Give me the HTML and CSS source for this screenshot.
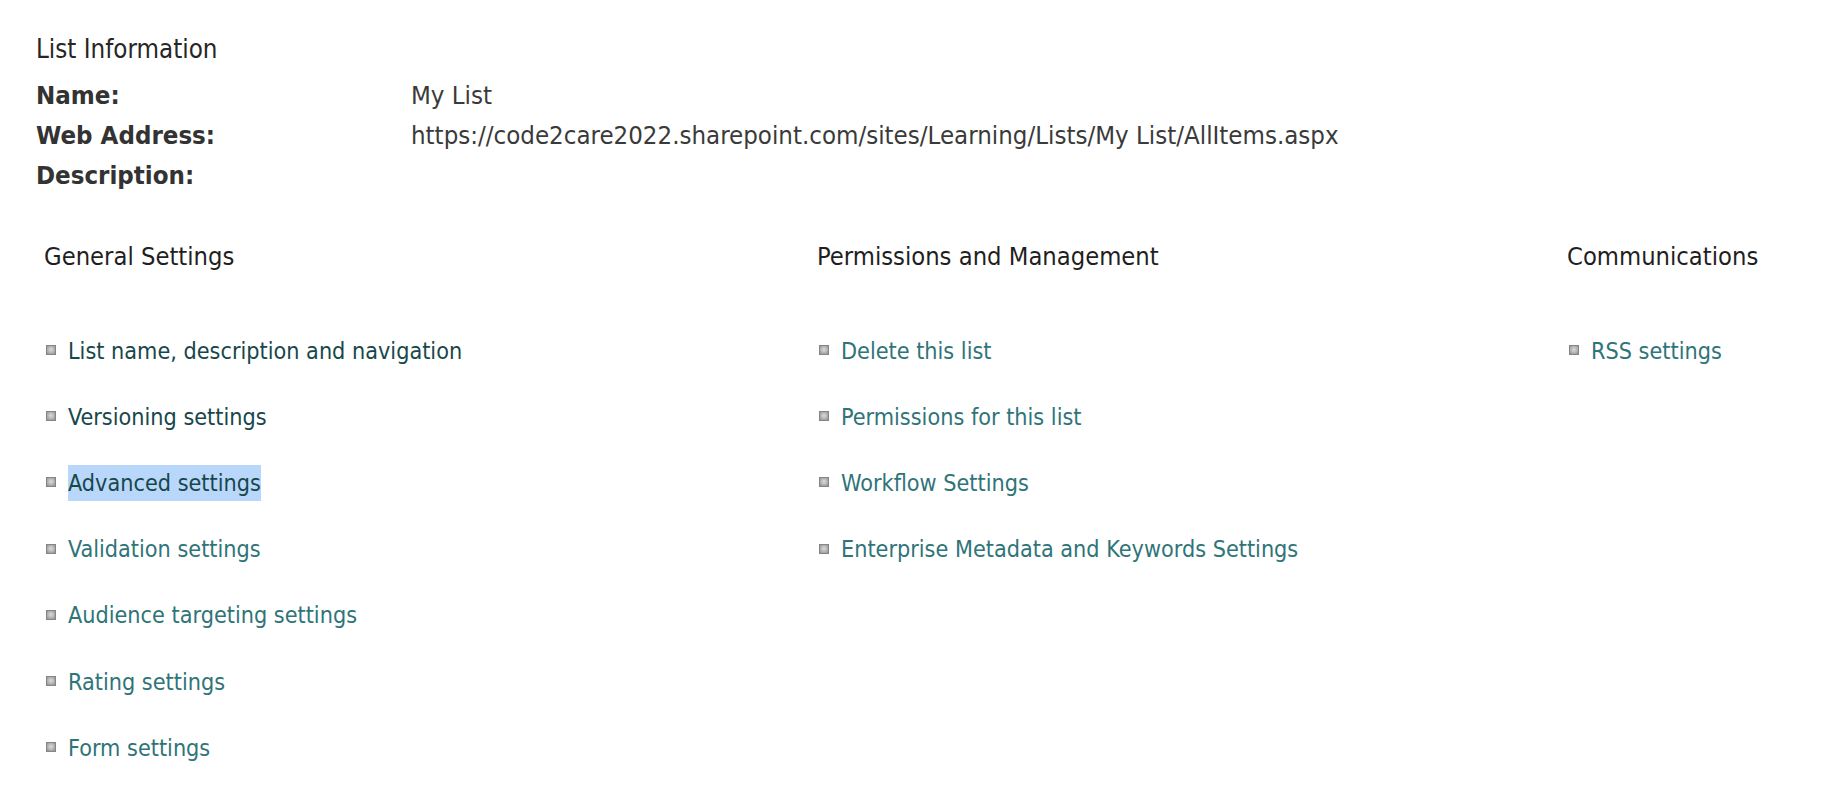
FILE: index.html
```html
<!DOCTYPE html>
<html lang="en">
<head>
<meta charset="utf-8">
<title>List Settings</title>
<link rel="stylesheet" href="styles.css">
</head>
<body>
<div class="page">
  <div class="title">List Information</div>
  <div class="info">
    <div class="label">Name:</div><div class="value">My List</div>
    <div class="label">Web Address:</div><div class="value">https://code2care2022.sharepoint.com/sites/Learning/Lists/My List/AllItems.aspx</div>
    <div class="label">Description:</div><div class="value"></div>
  </div>
  <div class="sections">
    <div class="section">
      <div class="heading">General Settings</div>
      <ul class="links">
        <li><span class="bullet"></span><a class="visited">List name, description and navigation</a></li>
        <li><span class="bullet"></span><a class="visited">Versioning settings</a></li>
        <li><span class="bullet"></span><a class="visited"><span class="sel">Advanced settings</span></a></li>
        <li><span class="bullet"></span><a>Validation settings</a></li>
        <li><span class="bullet"></span><a>Audience targeting settings</a></li>
        <li><span class="bullet"></span><a>Rating settings</a></li>
        <li><span class="bullet"></span><a>Form settings</a></li>
      </ul>
    </div>
    <div class="section">
      <div class="heading">Permissions and Management</div>
      <ul class="links">
        <li><span class="bullet"></span><a>Delete this list</a></li>
        <li><span class="bullet"></span><a>Permissions for this list</a></li>
        <li><span class="bullet"></span><a>Workflow Settings</a></li>
        <li><span class="bullet"></span><a>Enterprise Metadata and Keywords Settings</a></li>
      </ul>
    </div>
    <div class="section">
      <div class="heading">Communications</div>
      <ul class="links">
        <li><span class="bullet"></span><a>RSS settings</a></li>
      </ul>
    </div>
  </div>
</div>
</body>
</html>
```
FILE: styles.css
```css
html, body {
  margin: 0;
  padding: 0;
  background: #ffffff;
}
body {
  font-family: "DejaVu Sans Condensed", "DejaVu Sans", sans-serif;
  font-size: 23.2px;
  color: #333333;
}
.page {
  padding: 30px 0 0 36px;
}
.title {
  font-size: 25.7px;
  line-height: 38px;
  color: #262626;
}
.info {
  margin-top: 7px;
  display: grid;
  grid-template-columns: 375px auto;
  grid-auto-rows: 40px;
  align-items: center;
  font-size: 25.6px;
}
.label {
  font-weight: bold;
  color: #333333;
}
.value {
  color: #3a3a3a;
}
.sections {
  margin: 42px 0 0 8px;
  display: grid;
  grid-template-columns: 773px 750px auto;
}
.heading {
  font-size: 25.3px;
  line-height: 40px;
  color: #1f1f1f;
}
.links {
  list-style: none;
  margin: 40px 0 0 0;
  padding: 0;
}
.links li {
  display: flex;
  align-items: center;
  height: 66.2px;
}
.bullet {
  width: 8px;
  height: 8px;
  margin-left: 2px;
  margin-right: 12px;
  border: 1px solid #858585;
  background: radial-gradient(circle at 50% 45%, #dcdcdc 0%, #b3b3b3 55%, #8c8c8c 100%);
  flex: none;
}
a {
  color: #2f7478;
  text-decoration: none;
}
a.visited {
  color: #18474b;
}
.sel {
  background: #b9d7fb;
  padding: 4px 0 5px;
}
```
